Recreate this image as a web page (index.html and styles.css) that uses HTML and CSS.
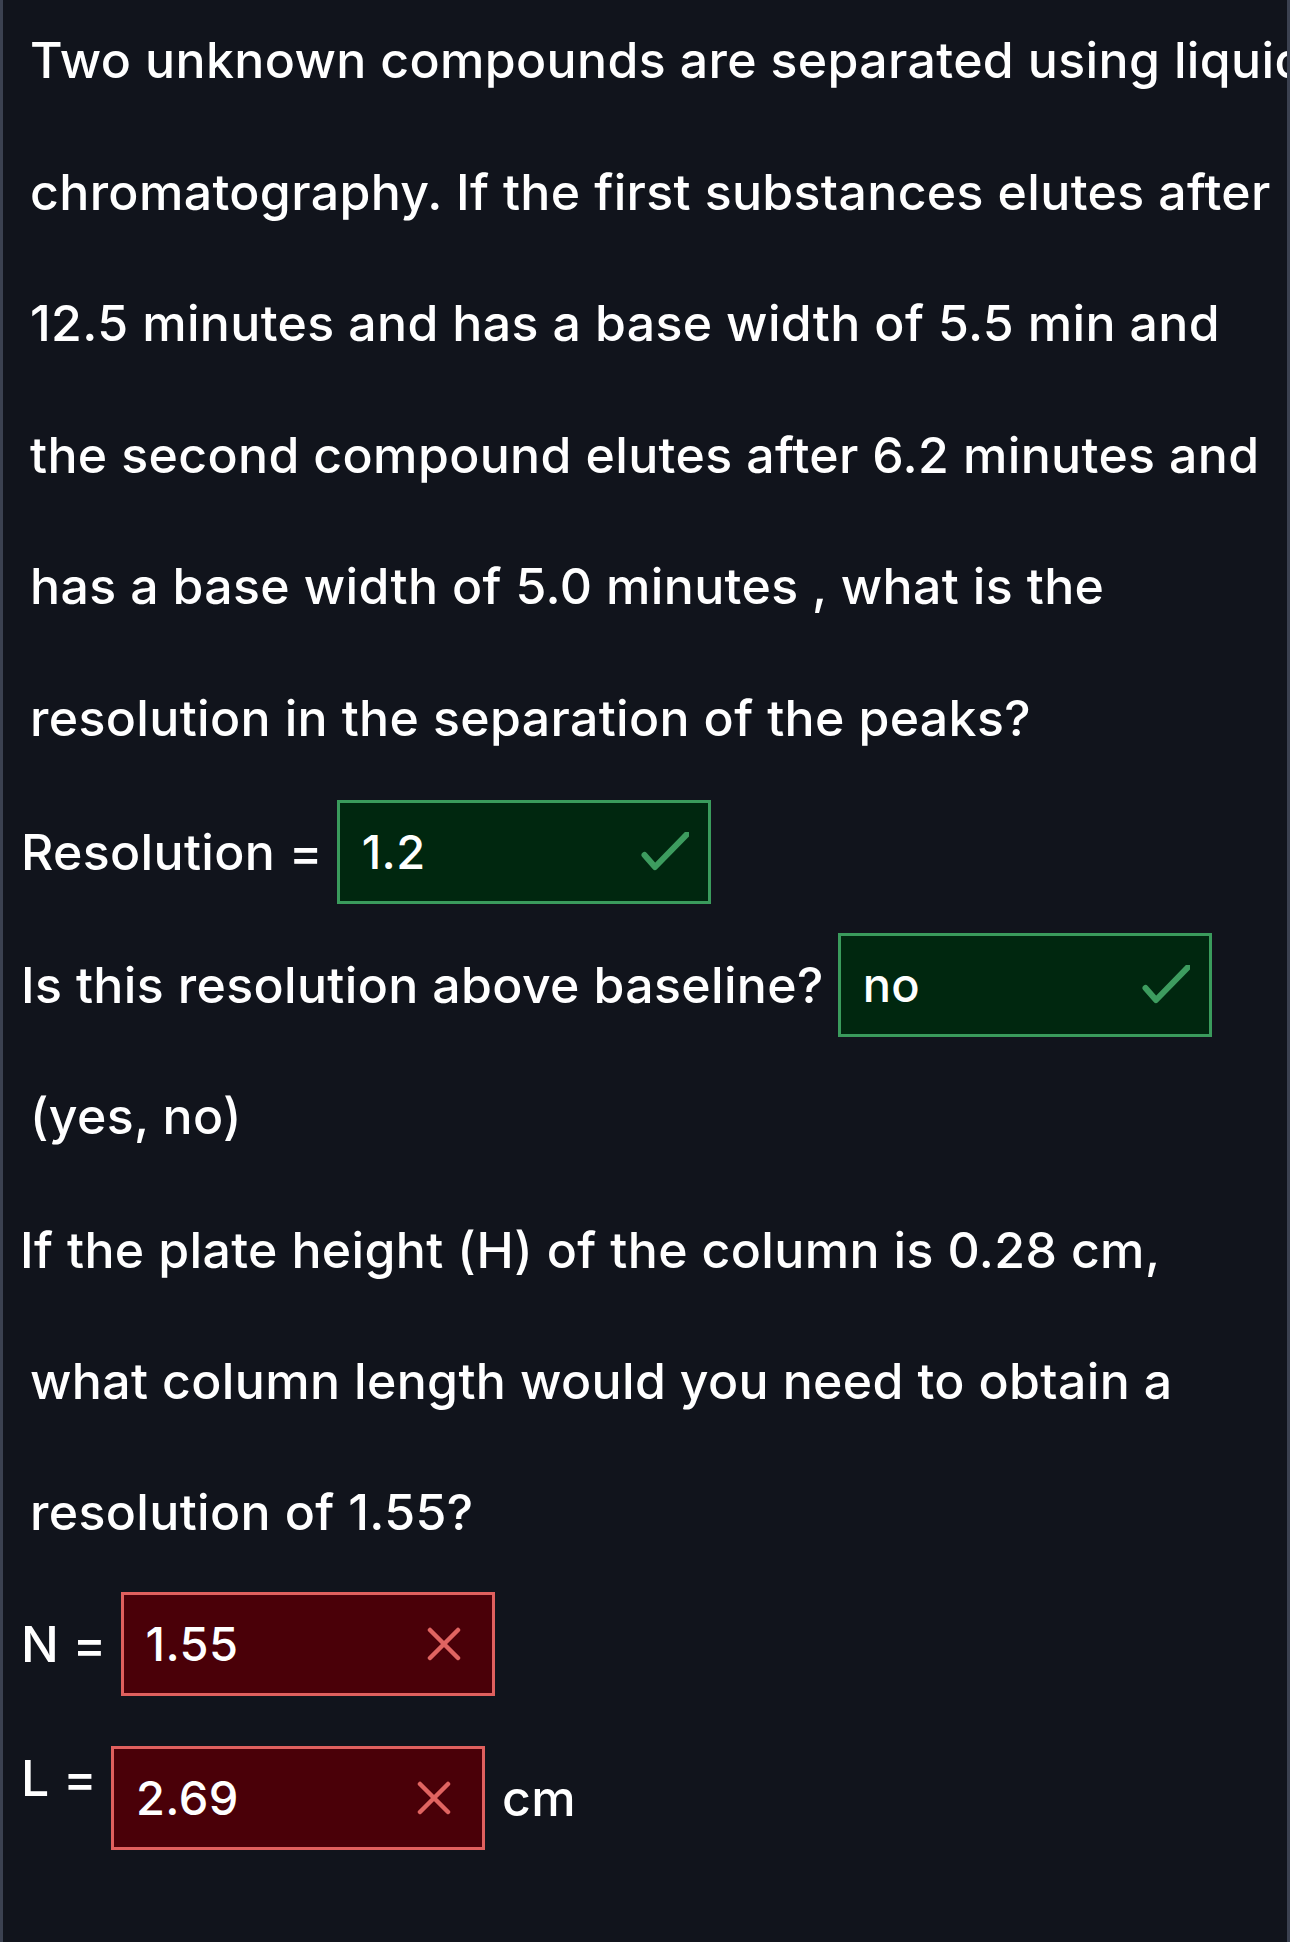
FILE: index.html
```html
<!DOCTYPE html>
<html lang="en">
<head>
<meta charset="utf-8">
<title>Chromatography resolution</title>
<link rel="stylesheet" href="styles.css">
</head>
<body>
<main class="card">
  <div class="question">
    <div class="line">Two unknown compounds are separated using liquid</div>
    <div class="line">chromatography. If the first substances elutes after</div>
    <div class="line">12.5 minutes and has a base width of 5.5 min and</div>
    <div class="line">the second compound elutes after 6.2 minutes and</div>
    <div class="line">has a base width of 5.0 minutes , what is the</div>
    <div class="line">resolution in the separation of the peaks?</div>
  </div>

  <div class="row row-res">
    <span class="label">Resolution =</span>
    <div class="answer correct">
      <span class="value">1.2</span>
      <span class="icon"><svg width="48" height="40" viewBox="0 0 48 40"><polyline points="3.5,23 14,35 52,-4" fill="none" stroke="#3d9c5f" stroke-width="6" stroke-linecap="round" stroke-linejoin="round"/></svg></span>
    </div>
  </div>

  <div class="row row-base">
    <span class="label">Is this resolution above baseline?</span>
    <div class="answer correct">
      <span class="value">no</span>
      <span class="icon"><svg width="48" height="40" viewBox="0 0 48 40"><polyline points="3.5,23 14,35 52,-4" fill="none" stroke="#3d9c5f" stroke-width="6" stroke-linecap="round" stroke-linejoin="round"/></svg></span>
    </div>
  </div>

  <div class="line line-yesno">(yes, no)</div>
  <div class="line line-lead">If the plate height (H) of the column is 0.28 cm,</div>
  <div class="line">what column length would you need to obtain a</div>
  <div class="line">resolution of 1.55?</div>

  <div class="row row-n">
    <span class="label">N =</span>
    <div class="answer wrong">
      <span class="value">1.55</span>
      <span class="icon"><svg width="34" height="34" viewBox="0 0 34 34"><path d="M3 3 L31 31 M31 3 L3 31" fill="none" stroke="#e06461" stroke-width="4.5" stroke-linecap="round"/></svg></span>
    </div>
  </div>

  <div class="row row-l">
    <span class="label label-raised">L =</span>
    <div class="answer wrong">
      <span class="value">2.69</span>
      <span class="icon"><svg width="34" height="34" viewBox="0 0 34 34"><path d="M3 3 L31 31 M31 3 L3 31" fill="none" stroke="#e06461" stroke-width="4.5" stroke-linecap="round"/></svg></span>
    </div>
    <span class="unit">cm</span>
  </div>
</main>
</body>
</html>
```

FILE: styles.css
```css
html, body {
  margin: 0;
  padding: 0;
  background: #11141c;
}

body {
  font-family: Inter, "Noto Sans", "Liberation Sans", sans-serif;
  font-weight: 500;
  letter-spacing: 0.35px;
  color: #ffffff;
}

.card {
  box-sizing: border-box;
  width: 1290px;
  min-height: 1942px;
  border-left: 3px solid #3b4150;
  border-right: 3px solid #3b4150;
  overflow: hidden;
}

.question {
  margin-top: -5px;
}

.line {
  white-space: nowrap;
  font-size: 50px;
  line-height: 131.6px;
  padding-left: 27px;
}

.line-yesno {
  margin-top: 13px;
  line-height: 132px;
}

.line-lead {
  padding-left: 17px;
  margin-top: 2px;
  line-height: 132px;
}

.row {
  display: flex;
  align-items: center;
  gap: 14px;
  padding-left: 18px;
  font-size: 50px;
  line-height: normal;
  white-space: nowrap;
}

.row-res {
  margin-top: 15px;
}

.row-base {
  margin-top: 29px;
}

.row-n {
  margin-top: 13px;
}

.row-l {
  margin-top: 50px;
}

.label-raised {
  margin-bottom: 40px;
}

.answer {
  box-sizing: border-box;
  width: 374px;
  height: 104px;
  border: 3px solid;
  display: flex;
  align-items: center;
  padding-left: 22px;
  font-size: 47px;
}

.answer.correct {
  background: #00270f;
  border-color: #3a9b5c;
}

.answer.wrong {
  background: #4a0008;
  border-color: #e0605e;
}

.value {
  flex: 1;
}

.icon {
  width: 56px;
  margin-right: 15px;
  display: flex;
  justify-content: center;
  align-items: center;
}

.answer.wrong .icon {
  margin-right: 20px;
}

.icon svg {
  display: block;
}

.unit {
  font-size: 50px;
  margin-left: 3px;
}
```
